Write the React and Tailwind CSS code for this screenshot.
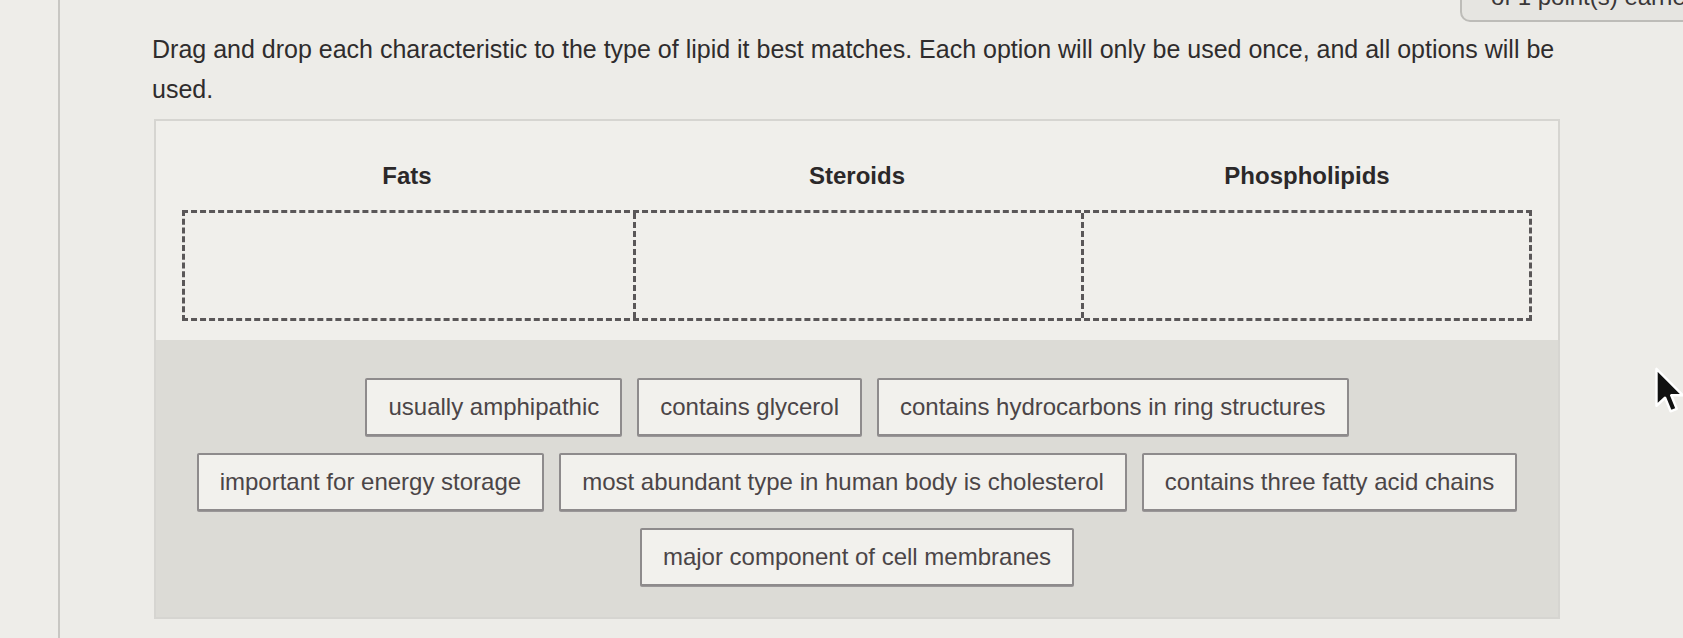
import React from 'react'

const ROWS = [
  ['usually amphipathic', 'contains glycerol', 'contains hydrocarbons in ring structures'],
  ['important for energy storage', 'most abundant type in human body is cholesterol', 'contains three fatty acid chains'],
  ['major component of cell membranes'],
]

const LIPIDS = ['Fats', 'Steroids', 'Phospholipids']

function Chip({ label }) {
  return (
    <div className="flex h-[58px] items-center rounded-[2px] border-2 border-[#8e8b8c] bg-[#f2f1ed] px-[21px] text-[24px] leading-none text-[#4b4547] shadow-[0_1px_0_#9a9798]">
      {label}
    </div>
  )
}

function Cursor() {
  return (
    <svg className="absolute left-[1654px] top-[366px]" width="32" height="50" viewBox="0 0 26 40">
      <path
        d="M2 2 L2 32 L9 25.5 L13.5 36.5 L18.5 34.5 L14 23.5 L23.5 23.5 Z"
        fill="#111"
        stroke="#fff"
        strokeWidth="2"
        strokeLinejoin="round"
      />
    </svg>
  )
}

export default function App() {
  return (
    <div className="relative flex h-[638px] w-full overflow-hidden bg-[#edece8] font-['Liberation_Sans',Arial,sans-serif]">
      <div className="w-[60px] shrink-0 border-r-2 border-[#c8c7c3] bg-[#eeede9]" />

      <div className="min-w-0 flex-1 pl-[92px]">
        {/* score badge, cut off by the top of the window */}
        <div className="flex h-[22px] justify-end">
          <div className="-mr-[40px] -mt-[22px] flex h-[44px] w-[263px] shrink-0 items-end rounded-[10px] border-2 border-[#bdbcb8] bg-[#e6e5e1] pb-[11px] pl-[29px] text-[24px] leading-none text-[#3a3738]">
            of 1 point(s) earned
          </div>
        </div>

        <p className="mt-[7px] w-[1440px] text-[25px] leading-[40px] text-[#2f2c2d]">
          Drag and drop each characteristic to the type of lipid it best matches. Each option will only be used once, and all options will be used.
        </p>

        <div className="ml-[2px] mt-[10px] w-[1406px] border-2 border-[#d6d5d1] bg-[#f0efeb]">
          <div className="px-[26px] pb-[19px] pt-[41px]">
            <div className="grid grid-cols-3">
              {LIPIDS.map(name => (
                <div key={name} className="h-[28px] text-center text-[24px] font-bold leading-[28px] text-[#2b2829]">
                  {name}
                </div>
              ))}
            </div>
            <div className="mt-[20px] grid h-[111px] grid-cols-3 border-[3px] border-dashed border-[#5a5758]">
              <div />
              <div className="border-l-[3px] border-dashed border-[#5a5758]" />
              <div className="border-l-[3px] border-dashed border-[#5a5758]" />
            </div>
          </div>

          <div className="flex h-[277px] flex-col items-center gap-[17px] bg-[#dcdbd6] pt-[38px]">
            {ROWS.map((row, i) => (
              <div key={i} className="flex justify-center gap-[15px]">
                {row.map(label => <Chip key={label} label={label} />)}
              </div>
            ))}
          </div>
        </div>
      </div>

      <Cursor />
    </div>
  )
}
